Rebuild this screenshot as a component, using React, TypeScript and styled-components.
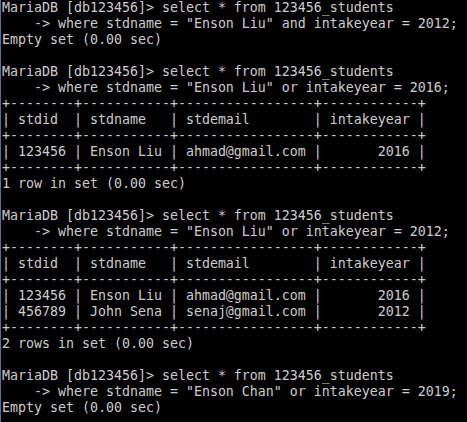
import React from "react";
import styled, { createGlobalStyle } from "styled-components";

const Global = createGlobalStyle`
  html, body { margin: 0; padding: 0; background: #000000; }
  body { width: 467px; height: 422px; overflow: hidden; }
`;

const Console = styled.div`
  box-sizing: border-box;
  width: 467px;
  height: 422px;
  background: #000000;
  border-left: 1px solid #5b6f8c;
  padding: 0 0 0 1px;
  display: flex;
  flex-direction: column;
`;

const Line = styled.div`
  font-family: "DejaVu Sans Mono", "Liberation Mono", monospace;
  font-size: 13.3px;
  letter-spacing: -0.01px;
  line-height: 16px;
  height: 16px;
  color: #cccccc;
  white-space: pre;
`;

const sep = "+--------+-----------+-----------------+------------+";
const head = "| stdid  | stdname   | stdemail        | intakeyear |";

const lines: string[] = [
  "MariaDB [db123456]> select * from 123456_students",
  '    -> where stdname = "Enson Liu" and intakeyear = 2012;',
  "Empty set (0.00 sec)",
  "",
  "MariaDB [db123456]> select * from 123456_students",
  '    -> where stdname = "Enson Liu" or intakeyear = 2016;',
  sep,
  head,
  sep,
  "| 123456 | Enson Liu | ahmad@gmail.com |       2016 |",
  sep,
  "1 row in set (0.00 sec)",
  "",
  "MariaDB [db123456]> select * from 123456_students",
  '    -> where stdname = "Enson Liu" or intakeyear = 2012;',
  sep,
  head,
  sep,
  "| 123456 | Enson Liu | ahmad@gmail.com |       2016 |",
  "| 456789 | John Sena | senaj@gmail.com |       2012 |",
  sep,
  "2 rows in set (0.00 sec)",
  "",
  "MariaDB [db123456]> select * from 123456_students",
  '    -> where stdname = "Enson Chan" or intakeyear = 2019;',
  "Empty set (0.00 sec)",
];

export default function App() {
  return (
    <>
      <Global />
      <Console>
        {lines.map((l, i) => (
          <Line key={i}>{l}</Line>
        ))}
      </Console>
    </>
  );
}
